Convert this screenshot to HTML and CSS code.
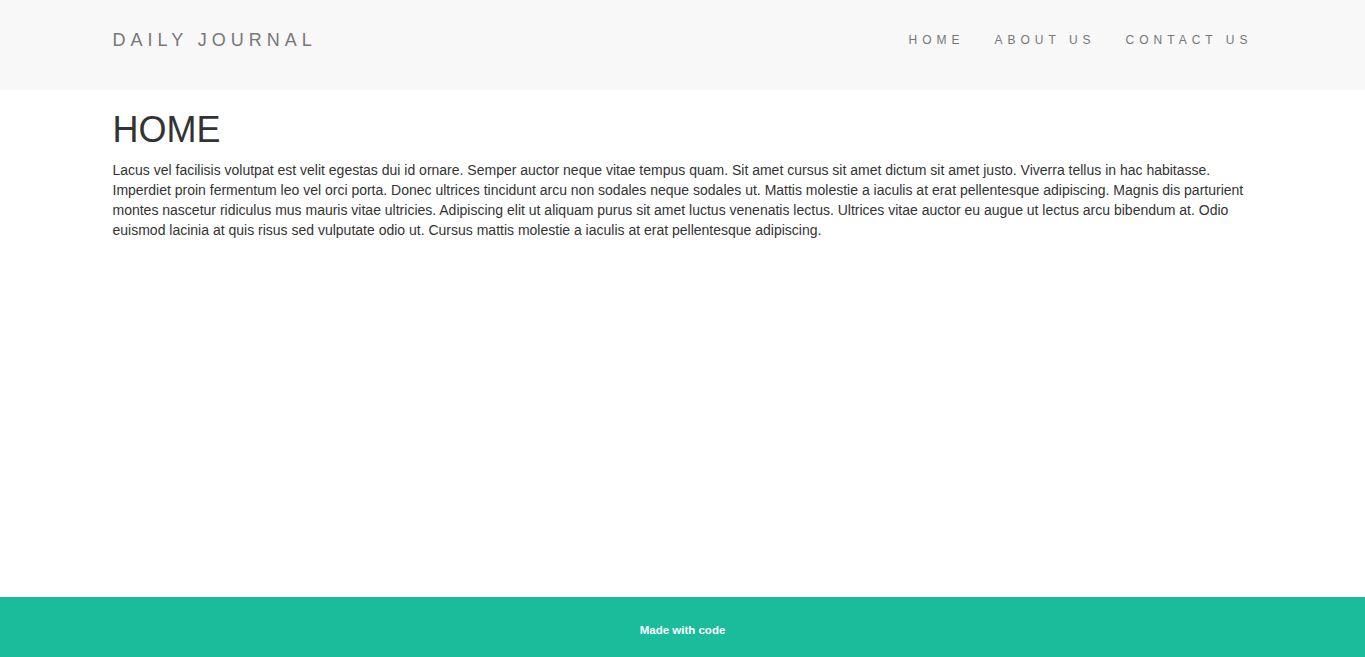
FILE: index.html
```
<!DOCTYPE html>
<html lang="en">
<head>
  <meta charset="UTF-8">
  <title>Daily Journal</title>
  <meta name="viewport" content="width=device-width, initial-scale=1.0">
  <link rel="stylesheet" href="styles.css">
</head>
<body>

  <nav class="navbar">
    <div class="container nav-inner">
      <a class="brand" href="#">DAILY JOURNAL</a>
      <ul class="nav-links">
        <li><a href="#">HOME</a></li>
        <li><a href="#">ABOUT US</a></li>
        <li><a href="#">CONTACT US</a></li>
      </ul>
    </div>
  </nav>

  <div class="container">
    <h1>HOME</h1>
    <p>Lacus vel facilisis volutpat est velit egestas dui id ornare. Semper auctor neque vitae tempus quam. Sit amet cursus sit amet dictum sit amet justo. Viverra tellus in hac habitasse. Imperdiet proin fermentum leo vel orci porta. Donec ultrices tincidunt arcu non sodales neque sodales ut. Mattis molestie a iaculis at erat pellentesque adipiscing. Magnis dis parturient montes nascetur ridiculus mus mauris vitae ultricies. Adipiscing elit ut aliquam purus sit amet luctus venenatis lectus. Ultrices vitae auctor eu augue ut lectus arcu bibendum at. Odio euismod lacinia at quis risus sed vulputate odio ut. Cursus mattis molestie a iaculis at erat pellentesque adipiscing.</p>
  </div>

  <footer class="footer">
    <p>Made with code</p>
  </footer>

</body>
</html>
```

FILE: styles.css
```
body {
  margin: 0;
  font-family: "Liberation Sans", Arial, sans-serif;
  font-size: 14px;
  line-height: 20px;
  color: #333;
  background: #fff;
}
a {
  text-decoration: none;
}
.container {
  width: 1140px;
  margin: 0 auto;
  padding: 0 15px;
}
.navbar {
  background: #f8f8f8;
  padding: 15px 0 25px;
  margin-bottom: 20px;
}
.nav-inner {
  display: flex;
  justify-content: space-between;
  align-items: center;
  height: 50px;
}
.brand {
  font-size: 18px;
  letter-spacing: 5px;
  color: #777;
}
.nav-links {
  list-style: none;
  display: flex;
  margin: 0 -15px 0 0;
  padding: 0;
}
.nav-links a {
  display: block;
  padding: 15px;
  font-size: 12px;
  letter-spacing: 5px;
  color: #777;
}
h1 {
  font-size: 36px;
  font-weight: 500;
  line-height: 1.1;
  margin: 20px 0 10px;
}
p {
  margin: 0 0 10px;
}
.footer {
  position: fixed;
  left: 0;
  right: 0;
  bottom: 0;
  height: 60px;
  box-sizing: border-box;
  padding-top: 6px;
  background: #1abc9c;
  display: flex;
  justify-content: center;
  align-items: center;
}
.footer p {
  margin: 0;
  color: #fff;
  font-size: 11.5px;
  font-weight: bold;
}
```
